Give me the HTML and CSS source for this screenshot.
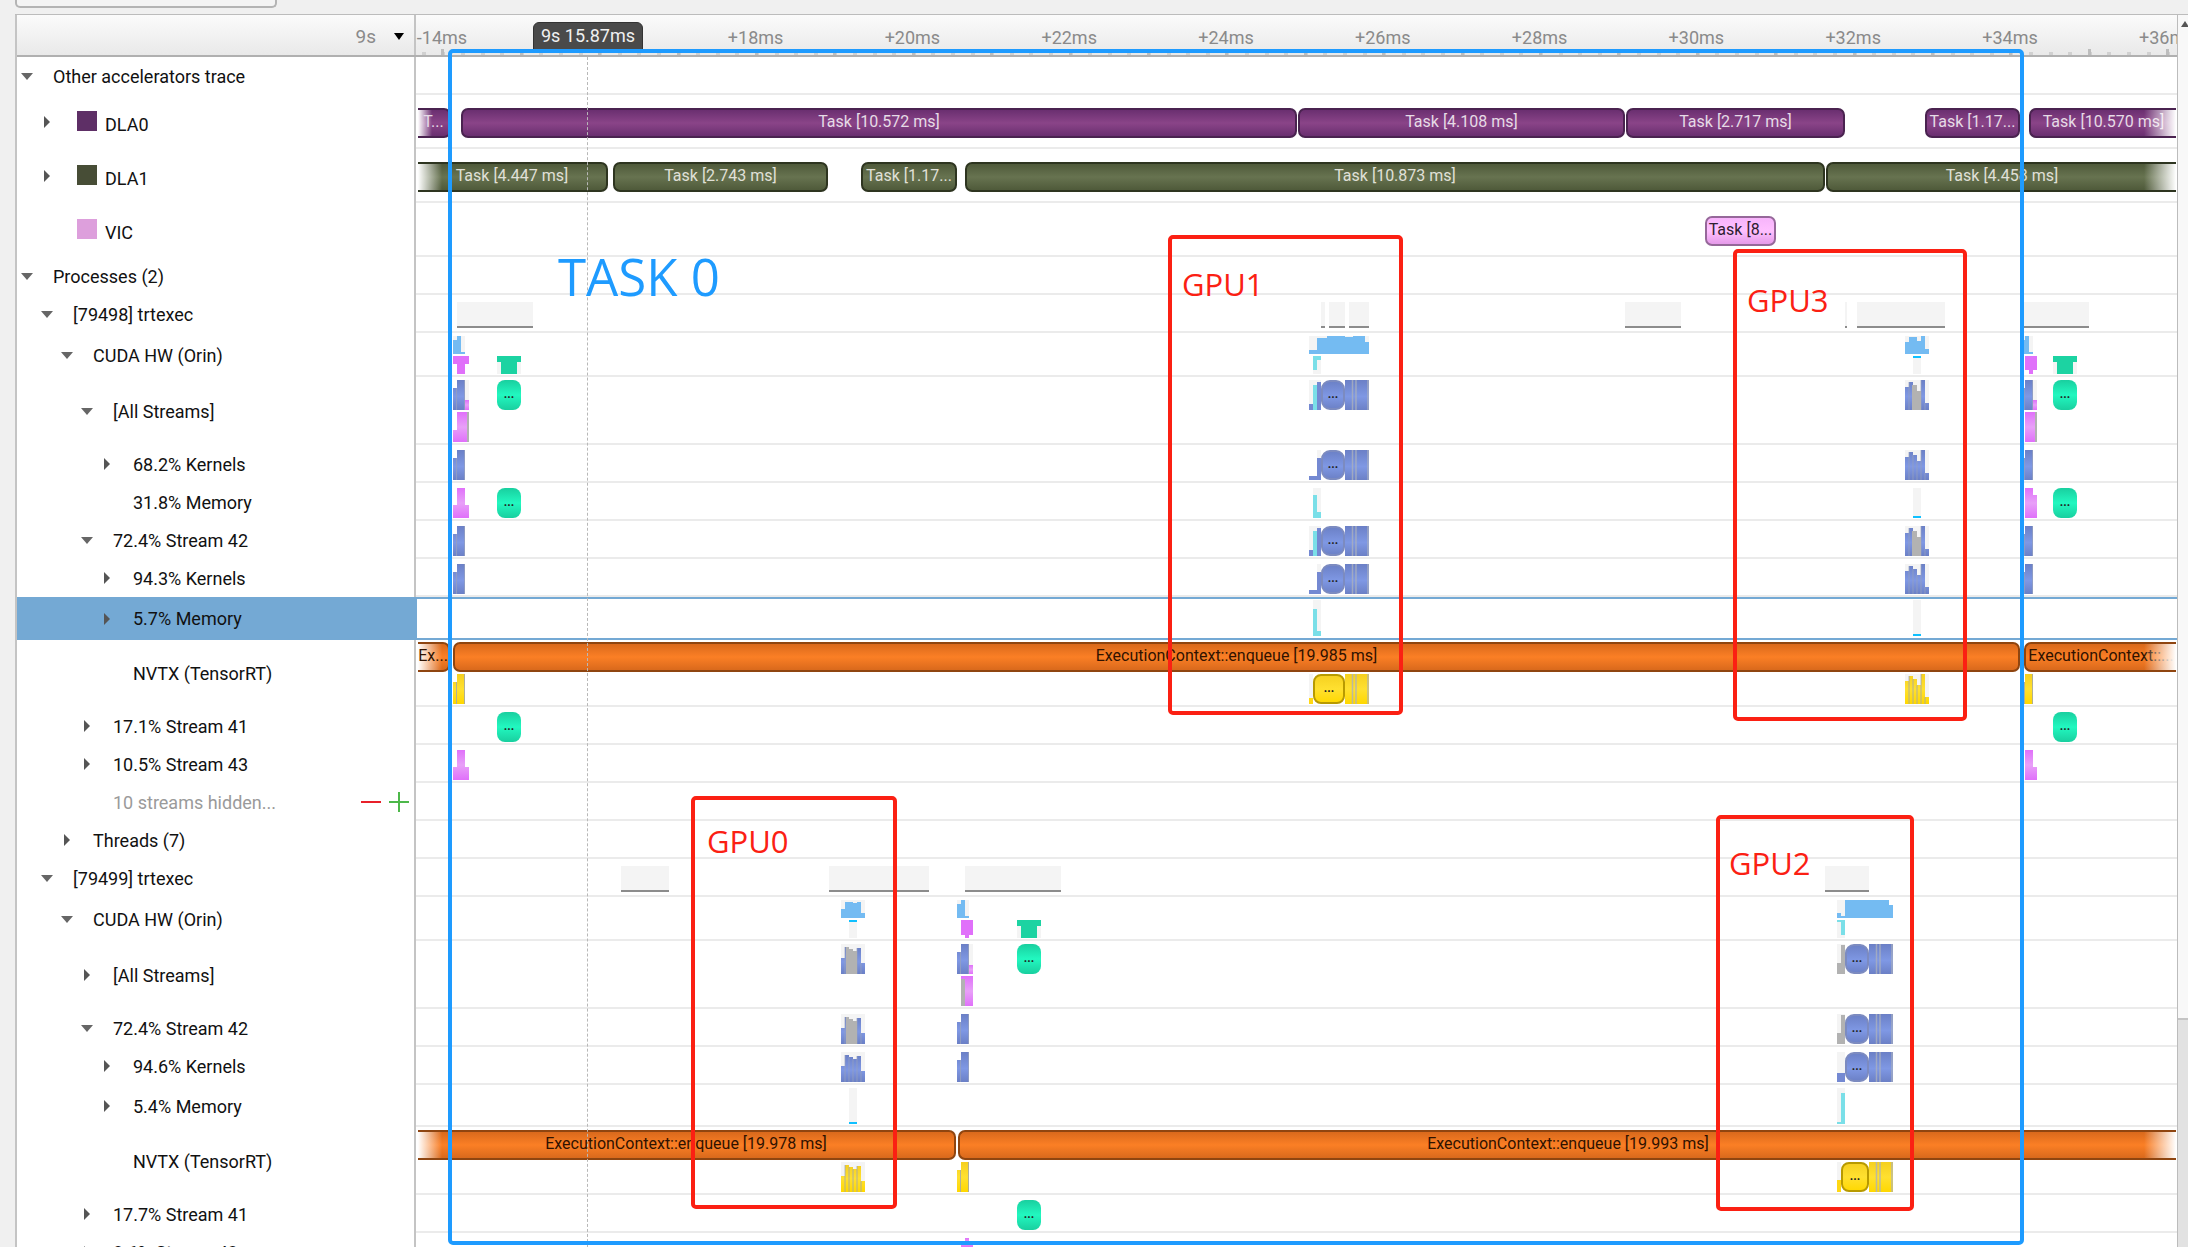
FILE: index.html
```html
<!DOCTYPE html>
<html lang="en">
<head>
<meta charset="utf-8">
<title>Timeline</title>
<link rel="stylesheet" href="styles.css">
</head>
<body>
<div class="page">
  <div class="topbar"><div class="tab"></div></div>
  <div class="frame">
    <div class="panel">
      <div class="header">
        <div class="head-l"><span class="sec">9s</span><i class="drop"></i></div>
        <div class="ruler">
          <div class="ticks"></div>
          <div class="labels">
            <span>-14ms</span><span></span><span>+18ms</span><span>+20ms</span><span>+22ms</span><span>+24ms</span><span>+26ms</span><span>+28ms</span><span>+30ms</span><span>+32ms</span><span>+34ms</span><span>+36ms</span>
          </div>
        </div>
      </div>
      <div class="rows">
        <div class="row"><div class="lbl l0"><i class="arr"><b class="down"></b></i><span>Other accelerators trace</span></div><div class="track"></div></div>
        <div class="row h54"><div class="lbl l1"><i class="arr"><b class="right"></b></i><i class="swatch s-dla0"></i><span>DLA0</span></div>
          <div class="track">
            <div class="bar purple short-fade cut-l" style="left:2px;width:33px"><span>T...</span></div>
            <div class="bar purple" style="left:45px;width:836px"><span>Task [10.572 ms]</span></div>
            <div class="bar purple" style="left:882px;width:327px"><span>Task [4.108 ms]</span></div>
            <div class="bar purple" style="left:1210px;width:219px"><span>Task [2.717 ms]</span></div>
            <div class="bar purple" style="left:1509px;width:95px"><span>Task [1.17...</span></div>
            <div class="bar purple cut-r" style="left:1613px;width:147px"><span>Task [10.570 ms]</span></div>
          </div></div>
        <div class="row h54"><div class="lbl l1"><i class="arr"><b class="right"></b></i><i class="swatch s-dla1"></i><span>DLA1</span></div>
          <div class="track">
            <div class="bar olive cut-l" style="left:2px;width:190px"><span>Task [4.447 ms]</span></div>
            <div class="bar olive" style="left:197px;width:215px"><span>Task [2.743 ms]</span></div>
            <div class="bar olive" style="left:445px;width:96px"><span>Task [1.17...</span></div>
            <div class="bar olive" style="left:549px;width:860px"><span>Task [10.873 ms]</span></div>
            <div class="bar olive cut-r" style="left:1410px;width:350px"><span>Task [4.458 ms]</span></div>
          </div></div>
        <div class="row h54"><div class="lbl l1"><i class="arr"></i><i class="swatch s-vic"></i><span>VIC</span></div>
          <div class="track"><div class="bar pink" style="left:1289px;width:71px"><span>Task [8...</span></div></div></div>
        <div class="row"><div class="lbl l0"><i class="arr"><b class="down"></b></i><span>Processes (2)</span></div><div class="track"></div></div>
        <div class="row"><div class="lbl l1"><i class="arr"><b class="down"></b></i><span>[79498] trtexec</span></div>
          <div class="track">
            <i class="sum" style="left:41px;width:76px"></i>
            <i class="sum" style="left:905px;width:4px"></i>
            <i class="sum" style="left:913px;width:16px"></i>
            <i class="sum" style="left:933px;width:20px"></i>
            <i class="sum" style="left:1209px;width:56px"></i>
            <i class="sum" style="left:1429px;width:2px"></i>
            <i class="sum" style="left:1441px;width:88px"></i>
            <i class="sum" style="left:1608px;width:65px"></i>
          </div></div>
        <div class="row h44"><div class="lbl l2"><i class="arr"><b class="down"></b></i><span>CUDA HW (Orin)</span></div><div class="track"></div></div>
        <div class="row h68"><div class="lbl l3"><i class="arr"><b class="down"></b></i><span>[All Streams]</span></div><div class="track"></div></div>
        <div class="row"><div class="lbl l4"><i class="arr"><b class="right"></b></i><span>68.2% Kernels</span></div><div class="track"></div></div>
        <div class="row"><div class="lbl l4"><i class="arr"></i><span>31.8% Memory</span></div><div class="track"></div></div>
        <div class="row"><div class="lbl l3"><i class="arr"><b class="down"></b></i><span>72.4% Stream 42</span></div><div class="track"></div></div>
        <div class="row"><div class="lbl l4"><i class="arr"><b class="right"></b></i><span>94.3% Kernels</span></div><div class="track"></div></div>
        <div class="row sel"><div class="lbl l4"><i class="arr"><b class="right"></b></i><span>5.7% Memory</span></div><div class="track"></div></div>
        <div class="row h67"><div class="lbl l4"><i class="arr"></i><span>NVTX (TensorRT)</span></div>
          <div class="track">
            <div class="bar orange near cut-l" style="left:2px;width:32px"><span>Ex...</span></div>
            <div class="bar orange near" style="left:37px;width:1567px"><span>ExecutionContext::enqueue [19.985 ms]</span></div>
            <div class="bar orange near cut-r" style="left:1608px;width:152px"><span>ExecutionContext::...</span></div>
          </div></div>
        <div class="row"><div class="lbl l3"><i class="arr"><b class="right"></b></i><span>17.1% Stream 41</span></div><div class="track"></div></div>
        <div class="row"><div class="lbl l3"><i class="arr"><b class="right"></b></i><span>10.5% Stream 43</span></div><div class="track"></div></div>
        <div class="row"><div class="lbl l3 hidden"><i class="arr"></i><span>10 streams hidden...</span>
            <svg class="pm" width="50" height="22" viewBox="0 0 50 22"><path class="minus" d="M0 11H20"/><path class="plus" d="M28 11H48M38 1V21"/></svg>
          </div><div class="track"></div></div>
        <div class="row"><div class="lbl l2"><i class="arr"><b class="right"></b></i><span>Threads (7)</span></div><div class="track"></div></div>
        <div class="row"><div class="lbl l1"><i class="arr"><b class="down"></b></i><span>[79499] trtexec</span></div>
          <div class="track">
            <i class="sum lo" style="left:205px;width:48px"></i>
            <i class="sum lo" style="left:413px;width:100px"></i>
            <i class="sum lo" style="left:549px;width:96px"></i>
            <i class="sum lo" style="left:1409px;width:44px"></i>
          </div></div>
        <div class="row h44"><div class="lbl l2"><i class="arr"><b class="down"></b></i><span>CUDA HW (Orin)</span></div><div class="track"></div></div>
        <div class="row h68"><div class="lbl l3"><i class="arr"><b class="right"></b></i><span>[All Streams]</span></div><div class="track"></div></div>
        <div class="row"><div class="lbl l3"><i class="arr"><b class="down"></b></i><span>72.4% Stream 42</span></div><div class="track"></div></div>
        <div class="row"><div class="lbl l4"><i class="arr"><b class="right"></b></i><span>94.6% Kernels</span></div><div class="track"></div></div>
        <div class="row h42"><div class="lbl l4"><i class="arr"><b class="right"></b></i><span>5.4% Memory</span></div><div class="track"></div></div>
        <div class="row h68"><div class="lbl l4"><i class="arr"></i><span>NVTX (TensorRT)</span></div>
          <div class="track">
            <div class="bar orange near2 cut-l" style="left:2px;width:538px"><span>ExecutionContext::enqueue [19.978 ms]</span></div>
            <div class="bar orange near2 cut-r" style="left:542px;width:1218px"><span>ExecutionContext::enqueue [19.993 ms]</span></div>
          </div></div>
        <div class="row"><div class="lbl l3"><i class="arr"><b class="right"></b></i><span>17.7% Stream 41</span></div><div class="track"></div></div>
        <div class="row"><div class="lbl l3"><i class="arr"><b class="right"></b></i><span>8.6% Stream 43</span></div><div class="track"></div></div>
      </div>
    </div>
    <div class="scroll"><div class="thumb"><i class="up"></i></div></div>
  </div>

  <svg class="marks" width="2188" height="1247" viewBox="0 0 2188 1247">
    <defs>
      <linearGradient id="gk" x1="0" y1="0" x2="0" y2="1"><stop offset="0" stop-color="#6b80c6"/><stop offset=".55" stop-color="#7f98e4"/><stop offset="1" stop-color="#6b80c6"/></linearGradient>
      <linearGradient id="gp" x1="0" y1="0" x2="0" y2="1"><stop offset="0" stop-color="#e070fa"/><stop offset=".5" stop-color="#e8a0f8"/><stop offset="1" stop-color="#e070fa"/></linearGradient>
      <linearGradient id="gt" x1="0" y1="0" x2="0" y2="1"><stop offset="0" stop-color="#19cf9f"/><stop offset=".5" stop-color="#22f8c0"/><stop offset="1" stop-color="#19cf9f"/></linearGradient>
      <linearGradient id="gy" x1="0" y1="0" x2="0" y2="1"><stop offset="0" stop-color="#f5d020"/><stop offset=".5" stop-color="#ffe030"/><stop offset="1" stop-color="#ffd800"/></linearGradient>
      <g id="h5a"><rect class="bg" width="24" height="30"/><path d="M0 30V7H4V2H8V5H12V11H16V0H20V23H24V30Z"/><path class="st" d="M4 2V30M8 5V30M12 11V30M16 0V30M20 23V30"/></g>
      <g id="h5b"><rect class="bg" width="24" height="30"/><path d="M0 30V14H4V3H8V5H12V7H16V4H20V19H24V30Z"/><path class="st" d="M4 3V30M8 5V30M12 7V30M16 4V30M20 19V30"/></g>
      <path id="gr-a" class="gray" d="M7 30V5H12V11H16V30Z"/>
      <path id="gr-b" class="gray" d="M5 30V3H8V5H12V7H16V30Z"/>
      <g id="a2"><rect class="bg" x="12" width="0" height="30"/><path d="M0 30V8H4V0H12V30Z"/><path class="st" d="M3.5 8V30M11.5 0V30"/></g>
      <g id="bars"><rect width="24" height="30"/><path class="stg" d="M7.5 0V30M11 0V30M23 0V30"/></g>
      <g id="bk"><rect x="1" y="1" width="22" height="28" rx="8" fill="url(#gk)" stroke="#7c8bc0" stroke-width="2"/><text x="12" y="18" class="dots">...</text></g>
      <g id="bt"><rect width="24" height="30" rx="8" fill="url(#gt)"/><text x="12" y="18" class="dots">...</text></g>
      <g id="tealT"><rect class="bg" width="24" height="18"/><path class="teal" d="M0 0H24V6H20V18H4V6H0Z"/></g>
      <g id="up"><rect class="bg" width="12" height="18"/><path class="sky" d="M0 18V4H4V0H8V16H12V18Z"/></g>
      <g id="g1a"><rect class="bg" width="12" height="30"/><rect class="kflat" y="24" width="4" height="6"/><rect class="cy" x="4" y="5" width="4" height="25"/><rect class="kflat" x="8" y="2" width="4" height="28"/><use href="#bars" x="36" fill="url(#gk)"/><use href="#bk" x="12"/></g>
      <g id="g1b"><rect class="bg" x="8" width="4" height="30"/><rect class="kflat" y="26" width="8" height="4"/><rect class="kflat" x="8" y="8" width="4" height="22"/><use href="#bars" x="36" fill="url(#gk)"/><use href="#bk" x="12"/></g>
      <g id="g2a"><rect class="bg" width="8" height="30"/><rect class="gray" y="19" width="4" height="11"/><rect class="gray" x="4" y="1" width="4" height="29"/><use href="#bars" x="32" fill="url(#gk)"/><use href="#bk" x="8"/></g>
    </defs>

    <!-- first process: leading cluster -->
    <use href="#up" x="453" y="336"/>
    <path class="pinkf" d="M453 356H469V364H465V374H457V364H453Z"/>
    <use href="#tealT" x="497" y="356"/>
    <use href="#a2" x="453" y="380" fill="url(#gk)"/>
    <rect class="bg" x="465" y="380" width="4" height="20"/><rect x="465" y="400" width="4" height="10" fill="url(#gp)"/>
    <use href="#bt" x="497" y="380"/>
    <path fill="url(#gp)" d="M453 442V430H457V412H469V442Z"/><rect class="gray" x="467" y="412" width="2" height="30"/>
    <use href="#a2" x="453" y="450" fill="url(#gk)"/>
    <path fill="url(#gp)" d="M453 518V505H457V488H465V505H469V518Z"/><use href="#bt" x="497" y="488"/>
    <use href="#a2" x="453" y="526" fill="url(#gk)"/>
    <use href="#a2" x="453" y="564" fill="url(#gk)"/>
    <use href="#a2" x="453" y="674" fill="url(#gy)"/>
    <use href="#bt" x="497" y="712"/>
    <path fill="url(#gp)" d="M453 780V767H457V750H465V767H469V780Z"/>

    <!-- first process: GPU1 -->
    <rect class="bg" x="1309" y="336" width="60" height="18"/>
    <path class="sky" d="M1309 354V350H1317V338H1327V336H1345V337H1353V336H1365V342H1369V354Z"/>
    <rect class="bg" x="1313" y="356" width="8" height="18"/><path class="cy" d="M1313 356H1321V360H1317V370H1313Z"/>
    <use href="#g1a" x="1309" y="380"/><use href="#g1b" x="1309" y="450"/>
    <rect class="bg" x="1313" y="488" width="8" height="30"/><path class="cy" d="M1313 518V495H1317V512H1321V518Z"/>
    <use href="#g1a" x="1309" y="526"/><use href="#g1b" x="1309" y="564"/>
    <rect class="bg" x="1313" y="600" width="8" height="36"/><path class="cy" d="M1313 636V609H1317V631H1321V636Z"/>
    <rect class="bg" x="1309" y="674" width="4" height="30"/><rect class="yel" x="1309" y="698" width="4" height="6"/>
    <use href="#bars" x="1345" y="674" fill="url(#gy)"/>
    <rect x="1314" y="675" width="30" height="28" rx="7" fill="url(#gy)" stroke="#b89a00" stroke-width="2"/><text x="1329" y="692" class="dots">...</text>

    <!-- first process: GPU3 -->
    <rect class="bg" x="1905" y="336" width="24" height="18"/><path class="sky" d="M1905 354V342H1909V337H1917V341H1921V336H1925V349H1929V354Z"/>
    <rect class="bg" x="1913" y="356" width="8" height="18"/><rect class="bright" x="1913" y="356" width="8" height="2"/>
    <use href="#h5a" x="1905" y="380" fill="url(#gk)"/><use href="#gr-a" x="1905" y="380"/>
    <use href="#h5a" x="1905" y="450" fill="url(#gk)"/>
    <rect class="bg" x="1913" y="488" width="8" height="30"/><rect class="bright" x="1913" y="516" width="8" height="2"/>
    <use href="#h5a" x="1905" y="526" fill="url(#gk)"/><use href="#gr-a" x="1905" y="526"/>
    <use href="#h5a" x="1905" y="564" fill="url(#gk)"/>
    <rect class="bg" x="1913" y="600" width="8" height="36"/><rect class="bright" x="1913" y="634" width="8" height="2"/>
    <use href="#h5a" x="1905" y="674" fill="url(#gy)"/>

    <!-- first process: trailing cluster -->
    <use href="#up" x="2021" y="336"/>
    <path class="pinkf" d="M2025 356H2037V370H2033V374H2029V370H2025Z"/>
    <use href="#tealT" x="2053" y="356"/>
    <use href="#a2" x="2021" y="380" fill="url(#gk)"/>
    <rect class="bg" x="2033" y="380" width="4" height="20"/><rect x="2033" y="400" width="4" height="10" fill="url(#gp)"/>
    <use href="#bt" x="2053" y="380"/>
    <rect x="2025" y="412" width="12" height="30" fill="url(#gp)"/><rect class="gray" x="2035" y="412" width="2" height="30"/>
    <use href="#a2" x="2021" y="450" fill="url(#gk)"/>
    <path fill="url(#gp)" d="M2025 518V488H2033V495H2037V518Z"/><use href="#bt" x="2053" y="488"/>
    <use href="#a2" x="2021" y="526" fill="url(#gk)"/>
    <use href="#a2" x="2021" y="564" fill="url(#gk)"/>
    <use href="#a2" x="2021" y="674" fill="url(#gy)"/>
    <use href="#bt" x="2053" y="712"/>
    <path fill="url(#gp)" d="M2025 780V750H2033V767H2037V780Z"/>

    <!-- second process: GPU0 -->
    <rect class="bg" x="841" y="900" width="24" height="18"/><path class="sky" d="M841 918V909H845V902H853V903H857V902H861V913H865V918Z"/>
    <rect class="bg" x="849" y="920" width="8" height="18"/><rect class="bright" x="849" y="920" width="8" height="2"/>
    <use href="#h5b" x="841" y="944" fill="url(#gk)"/><use href="#gr-b" x="841" y="944"/>
    <use href="#h5b" x="841" y="1014" fill="url(#gk)"/><use href="#gr-b" x="841" y="1014"/>
    <use href="#h5b" x="841" y="1052" fill="url(#gk)"/>
    <rect class="bg" x="849" y="1088" width="8" height="36"/><rect class="bright" x="849" y="1122" width="8" height="2"/>
    <use href="#h5b" x="841" y="1162" fill="url(#gy)"/>

    <!-- second process: middle cluster -->
    <use href="#up" x="957" y="900"/>
    <path class="pinkf" d="M961 920H973V935H969V938H965V935H961Z"/>
    <use href="#tealT" x="1017" y="920"/>
    <use href="#a2" x="957" y="944" fill="url(#gk)"/>
    <rect class="bg" x="969" y="944" width="4" height="21"/><rect x="969" y="965" width="4" height="9" fill="url(#gp)"/>
    <use href="#bt" x="1017" y="944"/>
    <rect x="961" y="976" width="12" height="30" fill="url(#gp)"/><rect class="gray" x="961" y="979" width="4" height="27"/>
    <use href="#a2" x="957" y="1014" fill="url(#gk)"/>
    <use href="#a2" x="957" y="1052" fill="url(#gk)"/>
    <use href="#a2" x="957" y="1162" fill="url(#gy)"/>
    <use href="#bt" x="1017" y="1200"/>
    <path fill="url(#gp)" d="M961 1247V1243H965V1238H969V1243H973V1247Z"/>

    <!-- second process: GPU2 -->
    <rect class="bg" x="1837" y="900" width="8" height="18"/><path class="sky" d="M1837 918V913H1841V916H1845V900H1889V905H1893V918Z"/>
    <rect class="bg" x="1837" y="920" width="8" height="18"/><path class="cy" d="M1837 920H1845V935H1841V922H1837Z"/>
    <use href="#g2a" x="1837" y="944"/><use href="#g2a" x="1837" y="1014"/>
    <rect class="bg" x="1837" y="1052" width="8" height="30"/><rect class="kflat" x="1837" y="1073" width="8" height="9"/>
    <use href="#bars" x="1869" y="1052" fill="url(#gk)"/><use href="#bk" x="1845" y="1052"/>
    <rect class="bg" x="1837" y="1088" width="8" height="36"/><path class="cy" d="M1841 1093H1845V1124H1837V1122H1841Z"/>
    <rect class="bg" x="1837" y="1162" width="4" height="30"/><rect class="yel" x="1837" y="1180" width="4" height="12"/>
    <use href="#bars" x="1869" y="1162" fill="url(#gy)"/>
    <rect x="1842" y="1163" width="26" height="28" rx="7" fill="url(#gy)" stroke="#b89a00" stroke-width="2"/><text x="1855" y="1180" class="dots">...</text>
  </svg>

  <i class="cursor-line"></i>
  <div class="cursor">9s 15.87ms</div>
  <div class="annot blue task0">TASK 0</div>
  <div class="annot red gpu1">GPU1</div>
  <div class="annot red gpu3">GPU3</div>
  <div class="annot red gpu0">GPU0</div>
  <div class="annot red gpu2">GPU2</div>
</div>
</body>
</html>
```
FILE: styles.css
```css
* { box-sizing: border-box; }
html, body { margin: 0; height: 1247px; overflow: hidden; background: #f0f0f0; }
body { font-family: Roboto, "Liberation Sans", sans-serif; color: #111; }
i { font-style: normal; display: block; }

.page { position: relative; width: 2188px; height: 1247px; overflow: hidden; }

.topbar { height: 14px; padding-left: 15px; }
.tab { width: 262px; height: 8px; background: #f4f4f4; border: 2px solid #b4b4b4; border-top: 0; border-radius: 0 0 5px 5px; }

.frame { display: flex; height: 1233px; margin-left: 15px; border-top: 1px solid #bcbcbc; }
.panel { flex: 1; min-width: 0; border-left: 2px solid #c4c4c4; background: #fff; overflow: hidden; }

.header { display: flex; height: 42px; background: linear-gradient(#fbfbfb, #e9e9e9); border-bottom: 2px solid #b0b0b0; }
.head-l { width: 399px; flex: none; display: flex; align-items: center; justify-content: flex-end; padding-right: 10px; padding-top: 2px; border-right: 2px solid #c4c4c4; font-size: 19px; color: #8a8a8a; }
.drop { width: 0; height: 0; margin-left: 18px; border: 5px solid transparent; border-top: 7px solid #000; border-bottom: 0; }

.ruler { position: relative; flex: 1; min-width: 0; overflow: hidden; }
.labels { display: flex; margin-left: -52.4px; padding-top: 11px; font-size: 18px; line-height: 24px; color: #8a8a8a; white-space: nowrap; }
.labels span { flex: none; width: 156.8px; text-align: center; }
.ticks { position: absolute; left: -53.4px; right: 0; bottom: 0; height: 6px;
  background:
    repeating-linear-gradient(90deg, #bdbdbd 0 3px, transparent 3px 78.4px) 0 0 / 100% 100% no-repeat,
    repeating-linear-gradient(90deg, #d0d0d0 0 4px, transparent 4px 19.6px) 0 100% / 100% 3px no-repeat; }

.rows { display: flex; flex-direction: column; }
.row { display: flex; height: 38px; flex: none; }
.h54 { height: 54px; }
.h44 { height: 44px; }
.h68 { height: 68px; }
.h67 { height: 67px; }
.h42 { height: 42px; }
.sel { height: 43px; }

.lbl { width: 399px; flex: none; display: flex; align-items: center; border-right: 2px solid #c4c4c4; font-size: 18px; white-space: nowrap; }
.lbl span { padding-top: 1px; }
.h54 .lbl span { padding-top: 4px; }
.sel .lbl span, .h67 .lbl span { padding-top: 0; }
.l0 { padding-left: 4px; }
.l1 { padding-left: 24px; }
.l2 { padding-left: 44px; }
.l3 { padding-left: 64px; }
.l4 { padding-left: 84px; }
.arr { width: 32px; flex: none; display: flex; }
.down { width: 0; height: 0; border: 6px solid transparent; border-top: 7px solid #666; border-bottom: 0; }
.right { width: 0; height: 0; margin-left: 3px; border: 6px solid transparent; border-left: 6px solid #555; border-right: 0; }
.swatch { width: 20px; height: 20px; margin: -2px 8px 0 4px; flex: none; }
.s-dla0 { background: #5e2f66; }
.s-dla1 { background: #474d36; }
.s-vic { background: #dd9fdc; }
.hidden { color: #9a9a9a; }
.pm { margin-left: auto; margin-right: 3px; flex: none; }
.minus { stroke: #e8202a; stroke-width: 2; fill: none; }
.plus { stroke: #4db84a; stroke-width: 2; fill: none; }

.track { position: relative; flex: 1; min-width: 0; border-bottom: 2px solid #ebebeb; }
.sel .lbl { background: #74a9d4; border-right-color: #74a9d4; }
.sel .track { border-top: 2px solid #74a9d4; border-bottom: 2px solid #74a9d4; border-left: 1px solid #74a9d4; }

.bar { position: absolute; top: 13px; height: 30px; display: flex; align-items: center; justify-content: center; overflow: hidden; border: 2px solid; border-radius: 7px; font-size: 16px; white-space: nowrap; }
.bar span { position: relative; top: -2px; }
.near { top: 2px; }
.near2 { top: 3px; }
.purple { background: linear-gradient(#6a2f70, #8a4488 50%, #6a2f70); border-color: #4a2350; color: #e6dbe6; }
.olive { background: linear-gradient(#4f5a3a, #677350 50%, #4f5a3a); border-color: #2e3520; color: #e0e0d8; }
.pink { background: linear-gradient(#f7b4fb, #ffc0ff 50%, #e59ae9); border-color: #96689a; color: #2e2030; }
.orange { background: linear-gradient(#d9691c, #fb7f25 50%, #d9691c); border-color: #8f4510; color: #301200; }
.cut-l { border-left: 0; border-top-left-radius: 0; border-bottom-left-radius: 0; }
.cut-r { border-right: 0; border-top-right-radius: 0; border-bottom-right-radius: 0; }
.cut-l::before { content: ""; position: absolute; top: -2px; bottom: -2px; left: 0; width: 24px; background: linear-gradient(90deg, #fff, rgba(255,255,255,0)); }
.short-fade::before { width: 14px; }
.cut-r::after { content: ""; position: absolute; top: -2px; bottom: -2px; right: 0; width: 32px; background: linear-gradient(270deg, #fff, rgba(255,255,255,0)); }

.sum { position: absolute; top: 7px; height: 26px; background: #f4f4f4; border-bottom: 2px solid #8c8c8c; }
.lo { top: 7px; }

.scroll { width: 11px; flex: none; margin-left: 0; background: #e2e2e2; border-left: 1px solid #bcbcbc; }
.thumb { height: 1005px; background: #f8f8f8; border-bottom: 2px solid #c4c4c4; padding: 6px 0 0 3px; }
.up { width: 0; height: 0; border: 4px solid transparent; border-bottom: 6px solid #555; border-top: 0; }

.marks { position: absolute; left: 0; top: 0; }
.marks .bg { fill: #f4f4f4; }
.sky { fill: #74bbf2; }
.cy { fill: #7adfe8; }
.pinkf { fill: #e070fa; }
.teal { fill: #1cd3a2; }
.yel { fill: #ffd814; }
.bright { fill: #10c0ff; }
.kflat { fill: #7489d2; }
.gray { fill: #b2b2b2; }
.st { stroke: rgba(150,160,190,.75); stroke-width: 1; fill: none; }
.stg { stroke: rgba(170,176,190,.8); stroke-width: 1.5; fill: none; }
.dots { font: bold 12px Roboto, sans-serif; text-anchor: middle; fill: #222; }

.cursor-line { position: absolute; left: 587px; top: 57px; bottom: 0; border-left: 1px dashed #b8b8b8; }
.cursor { position: absolute; left: 533px; top: 22px; width: 110px; height: 30px; padding-top: 2px; background: #4a4a4a; border: 1px solid #333; border-radius: 6px 6px 0 0; color: #f0f0f0; font-size: 18px; line-height: 22px; text-align: center; white-space: nowrap; }

.annot { position: absolute; border: 4px solid; border-radius: 5px; font-family: "Open Sans", sans-serif; line-height: 1; }
.blue { border-color: #1e9bff; color: #1e9bff; }
.red { border-color: #fb2013; color: #fb2013; font-size: 31px; }
.task0 { left: 448px; top: 49px; width: 1576px; height: 1196px; padding: 198px 0 0 106px; font-size: 51px; }
.gpu1 { left: 1168px; top: 235px; width: 235px; height: 480px; padding: 30px 0 0 10px; }
.gpu3 { left: 1733px; top: 249px; width: 234px; height: 472px; padding: 32px 0 0 10px; }
.gpu0 { left: 691px; top: 796px; width: 206px; height: 413px; padding: 26px 0 0 12px; }
.gpu2 { left: 1716px; top: 815px; width: 198px; height: 396px; padding: 29px 0 0 9px; }
```
